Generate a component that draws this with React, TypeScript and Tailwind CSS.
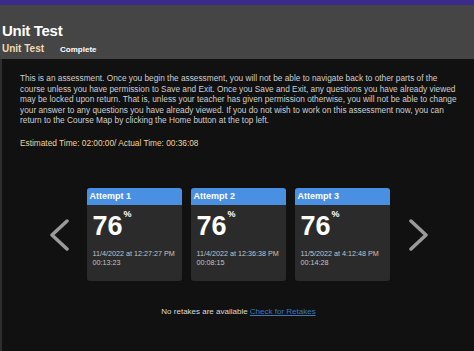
import React from 'react';

const attempts = [
  { name: 'Attempt 1', score: 76, date: '11/4/2022 at 12:27:27 PM', time: '00:13:23' },
  { name: 'Attempt 2', score: 76, date: '11/4/2022 at 12:36:38 PM', time: '00:08:15' },
  { name: 'Attempt 3', score: 76, date: '11/5/2022 at 4:12:48 PM', time: '00:14:28' },
];

function Chevron({ dir }: { dir: 'left' | 'right' }) {
  return (
    <svg width="22" height="32" viewBox="0 0 22 32" className="shrink-0">
      <polyline
        points={dir === 'left' ? '18,2 3,16 18,30' : '4,2 19,16 4,30'}
        fill="none"
        stroke="#9a9a9a"
        strokeWidth="3.5"
        strokeLinecap="round"
        strokeLinejoin="round"
      />
    </svg>
  );
}

function AttemptCard({ name, score, date, time }: (typeof attempts)[number]) {
  return (
    <div className="w-[95px] h-[93px] bg-[#2b2b2b] rounded-[3px] overflow-hidden">
      <div className="h-[17px] bg-[#4a90e2] px-[3px] text-[9px] font-bold text-white leading-[17px]">
        {name}
      </div>
      <div className="px-[6px]">
        <div className="mt-[8px] flex items-start text-white font-bold">
          <span className="text-[27px] leading-[27px]">{score}</span>
          <span className="text-[9px] leading-none ml-[1px] -mt-[3px]">%</span>
        </div>
        <div className="mt-[10px] text-[7.2px] leading-[8.5px] text-[#c4c4c4]">
          <div>{date}</div>
          <div>{time}</div>
        </div>
      </div>
    </div>
  );
}

export default function App() {
  return (
    <div className="w-[474px] h-[351px] overflow-hidden flex flex-col bg-[#111] font-['Liberation_Sans',Arial,sans-serif]">
      <div className="h-[5px] bg-[#3a2a8a] shrink-0" />
      <header className="h-[54px] bg-[#454545] shrink-0 px-[2px] pt-[17px]">
        <h1 className="text-[15px] font-bold text-white leading-[18px] tracking-[-0.3px]">Unit Test</h1>
        <div className="flex items-baseline gap-[16px] mt-[1px]">
          <span className="text-[10px] font-bold text-[#f0dcb0]">Unit Test</span>
          <span className="text-[8px] font-bold text-white">Complete</span>
        </div>
      </header>

      <main className="flex-1 flex border-l-2 border-[#2e2e2e]">
        <div className="flex-1 flex flex-col pl-[18px] pr-[14px] pt-[14px]">
          <p className="text-[8.3px] leading-[10.6px] text-[#cfcfcf]">
            This is an assessment. Once you begin the assessment, you will not be able to navigate back to other parts of the
            course unless you have permission to Save and Exit. Once you Save and Exit, any questions you have already viewed
            may be locked upon return. That is, unless your teacher has given permission otherwise, you will not be able to change
            your answer to any questions you have already viewed. If you do not wish to work on this assessment now, you can
            return to the Course Map by clicking the Home button at the top left.
          </p>
          <p className="mt-[11px] text-[8.3px] text-[#f0d49a]">Estimated Time: 02:00:00/ Actual Time: 00:36:08</p>

          <div className="mt-[39px] flex items-center justify-center -ml-[3px]">
            <Chevron dir="left" />
            <div className="flex gap-[9px] ml-[16px] mr-[17px]">
              {attempts.map((a) => (
                <AttemptCard key={a.name} {...a} />
              ))}
            </div>
            <Chevron dir="right" />
          </div>

          <div className="mt-[25px] text-center text-[8px] text-[#dcdcdc] -ml-[3px]">
            No retakes are available <span className="text-[#3a7ab8] underline">Check for Retakes</span>
          </div>
        </div>
      </main>
    </div>
  );
}
